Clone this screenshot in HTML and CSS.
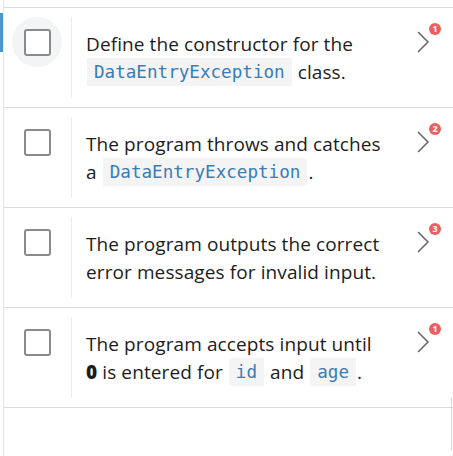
FILE: index.html
```html
<!DOCTYPE html>
<html>
<head>
<meta charset="utf-8">
<link rel="stylesheet" href="styles.css">
</head>
<body>
<div class="panel">
  <div class="list">
    <div class="row active">
      <div class="check-col"><div class="hover-circle"><span class="box"></span></div></div>
      <div class="divider"></div>
      <div class="text">Define the constructor for the <code>DataEntryException</code> class.</div>
      <div class="nav">
        <svg class="chev" width="14" height="22" viewBox="0 0 14 22"><polyline points="2,1 12,11 2,21" fill="none" stroke="#6b6b6b" stroke-width="1.6"/></svg>
        <span class="badge">1</span>
      </div>
    </div>
    <div class="row">
      <div class="check-col"><div class="hover-circle plain"><span class="box"></span></div></div>
      <div class="divider"></div>
      <div class="text">The program throws and catches a <code>DataEntryException</code>.</div>
      <div class="nav">
        <svg class="chev" width="14" height="22" viewBox="0 0 14 22"><polyline points="2,1 12,11 2,21" fill="none" stroke="#6b6b6b" stroke-width="1.6"/></svg>
        <span class="badge">2</span>
      </div>
    </div>
    <div class="row">
      <div class="check-col"><div class="hover-circle plain"><span class="box"></span></div></div>
      <div class="divider"></div>
      <div class="text">The program outputs the correct error messages for invalid input.</div>
      <div class="nav">
        <svg class="chev" width="14" height="22" viewBox="0 0 14 22"><polyline points="2,1 12,11 2,21" fill="none" stroke="#6b6b6b" stroke-width="1.6"/></svg>
        <span class="badge">3</span>
      </div>
    </div>
    <div class="row">
      <div class="check-col"><div class="hover-circle plain"><span class="box"></span></div></div>
      <div class="divider"></div>
      <div class="text">The program accepts input until <b>0</b> is entered for <code>id</code> and <code>age</code>.</div>
      <div class="nav">
        <svg class="chev" width="14" height="22" viewBox="0 0 14 22"><polyline points="2,1 12,11 2,21" fill="none" stroke="#6b6b6b" stroke-width="1.6"/></svg>
        <span class="badge">1</span>
      </div>
    </div>
  </div>
  <div class="edge"></div>
</div>
</body>
</html>
```
FILE: styles.css
```css
html, body {
  margin: 0;
  padding: 0;
  background: #fff;
}
body {
  font-family: "Open Sans", "Noto Sans", sans-serif;
  color: #1c1c1c;
}
.panel {
  position: relative;
  margin-left: 3px;
  border-left: 1px solid #e6e6e6;
  height: 456px;
  padding-top: 7px;
  box-sizing: border-box;
}
.list {
  border-top: 1px solid #dcdcdc;
}
.row {
  position: relative;
  display: flex;
  align-items: flex-start;
  height: 99px;
  border-bottom: 1px solid #dcdcdc;
}
.row.active::before {
  content: "";
  position: absolute;
  left: -4px;
  top: 5px;
  width: 3px;
  height: 39px;
  background: #4a98d0;
}
.check-col {
  width: 67px;
  flex: none;
  padding-top: 9px;
}
.hover-circle {
  width: 50px;
  height: 50px;
  margin-left: 8px;
  border-radius: 50%;
  background: #f3f4f5;
  display: flex;
  align-items: center;
  justify-content: center;
}
.hover-circle.plain {
  background: transparent;
}
.box {
  width: 23px;
  height: 23px;
  border: 2px solid #8a8a8a;
  border-radius: 3px;
  background: #fff;
}
.divider {
  flex: none;
  width: 1px;
  background: #ececec;
  margin-top: 9px;
  height: 81px;
}
.text {
  flex: 1;
  align-self: center;
  padding-left: 14px;
  padding-right: 22px;
  font-size: 19px;
  line-height: 28px;
  letter-spacing: 0.1px;
}
.text b {
  font-weight: 800;
}
code {
  display: inline-block;
  font-family: "DejaVu Sans Mono", monospace;
  font-size: 17.6px;
  line-height: 28px;
  letter-spacing: 0;
  color: #3a7cb5;
  background: #f4f4f4;
  padding: 0 7px;
  margin: 0 1px;
  vertical-align: top;
}
.nav {
  position: relative;
  flex: none;
  width: 36px;
  margin-right: 10px;
  padding-top: 23px;
}
.chev {
  display: block;
  margin-left: 9px;
}
.badge {
  position: absolute;
  left: 22px;
  top: 15px;
  width: 12px;
  height: 12px;
  border-radius: 50%;
  background: #ec5f60;
  color: #fff;
  font-family: "Noto Sans", sans-serif;
  font-size: 9px;
  font-weight: 700;
  line-height: 12px;
  text-align: center;
}
.edge {
  position: absolute;
  right: 1px;
  top: 398px;
  width: 1px;
  height: 52px;
  background: #d8d8d8;
}
```
